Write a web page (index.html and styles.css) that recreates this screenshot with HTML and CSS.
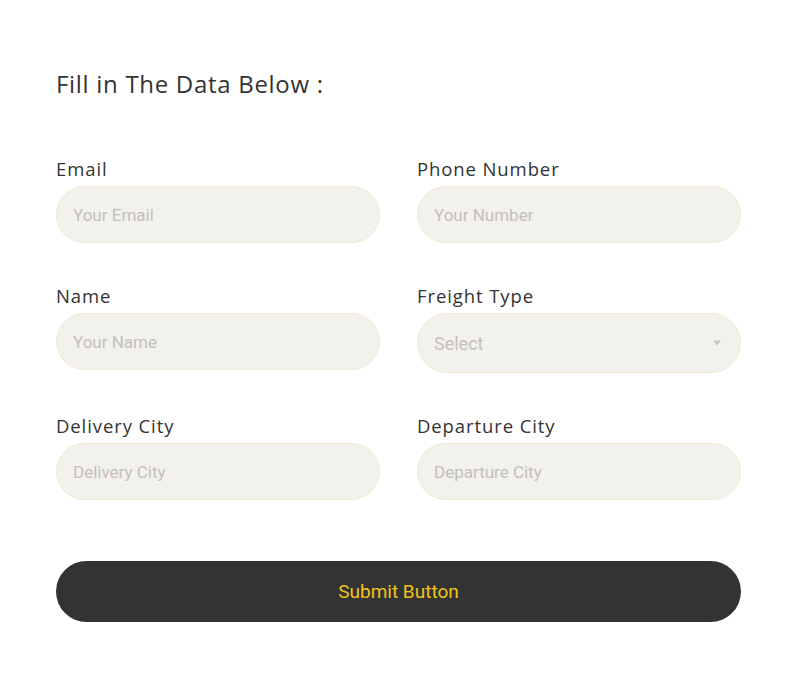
FILE: index.html
```html
<!DOCTYPE html>
<html>
<head>
<meta charset="utf-8">
<link rel="stylesheet" href="styles.css">
</head>
<body>
<div class="page">
  <h2 class="title">Fill in The Data Below :</h2>
  <form class="form">
    <div class="field">
      <label class="label">Email</label>
      <input class="input" type="text" placeholder="Your Email">
    </div>
    <div class="field">
      <label class="label">Phone Number</label>
      <input class="input" type="text" placeholder="Your Number">
    </div>
    <div class="field">
      <label class="label">Name</label>
      <input class="input" type="text" placeholder="Your Name">
    </div>
    <div class="field">
      <label class="label">Freight Type</label>
      <div class="select">
        <span class="select-text">Select</span>
        <svg class="caret" width="10" height="6" viewBox="0 0 10 6"><path d="M1 0.5 L9 0.5 L5 5.5 Z" fill="#c9c6c2"/></svg>
      </div>
    </div>
    <div class="field">
      <label class="label">Delivery City</label>
      <input class="input" type="text" placeholder="Delivery City">
    </div>
    <div class="field">
      <label class="label">Departure City</label>
      <input class="input" type="text" placeholder="Departure City">
    </div>
    <button class="submit" type="button">Submit Button</button>
  </form>
</div>
</body>
</html>
```
FILE: styles.css
```css
html, body {
  margin: 0;
  padding: 0;
  background: #ffffff;
}
.page {
  padding: 68px 59px 0 56px;
  font-family: "Open Sans", "Noto Sans", sans-serif;
  color: #333333;
}
.title {
  margin: 0;
  font-size: 24px;
  font-weight: 400;
  letter-spacing: 0.7px;
  line-height: 32px;
  color: #333333;
}
.form {
  margin-top: 56px;
  display: grid;
  grid-template-columns: 1fr 1fr;
  column-gap: 37px;
  row-gap: 40px;
}
.field {
  display: flex;
  flex-direction: column;
  gap: 5px;
}
.label {
  font-size: 18.5px;
  letter-spacing: 0.9px;
  line-height: 25px;
  color: #333333;
}
.input, .select {
  box-sizing: border-box;
  height: 57px;
  width: 100%;
  border: 1px solid #f1e9cd;
  background: #f3f1ec;
  border-radius: 29px;
  padding: 0 16px;
  font-family: "Roboto", sans-serif;
  font-size: 17px;
  color: #333;
  outline: none;
}
.input::placeholder {
  color: #c3bfbb;
}
.select {
  height: 60px;
  border-radius: 30px;
  display: flex;
  align-items: center;
  justify-content: space-between;
  padding: 0 18px 0 16px;
}
.select-text {
  color: #c3bfbb;
  font-size: 18px;
}
.submit {
  grid-column: 1 / -1;
  margin-top: 21px;
  height: 61px;
  border: none;
  border-radius: 31px;
  background: #333333;
  color: #f0c418;
  font-family: "Roboto", sans-serif;
  font-size: 19px;
  font-weight: 400;
  cursor: pointer;
}
```
